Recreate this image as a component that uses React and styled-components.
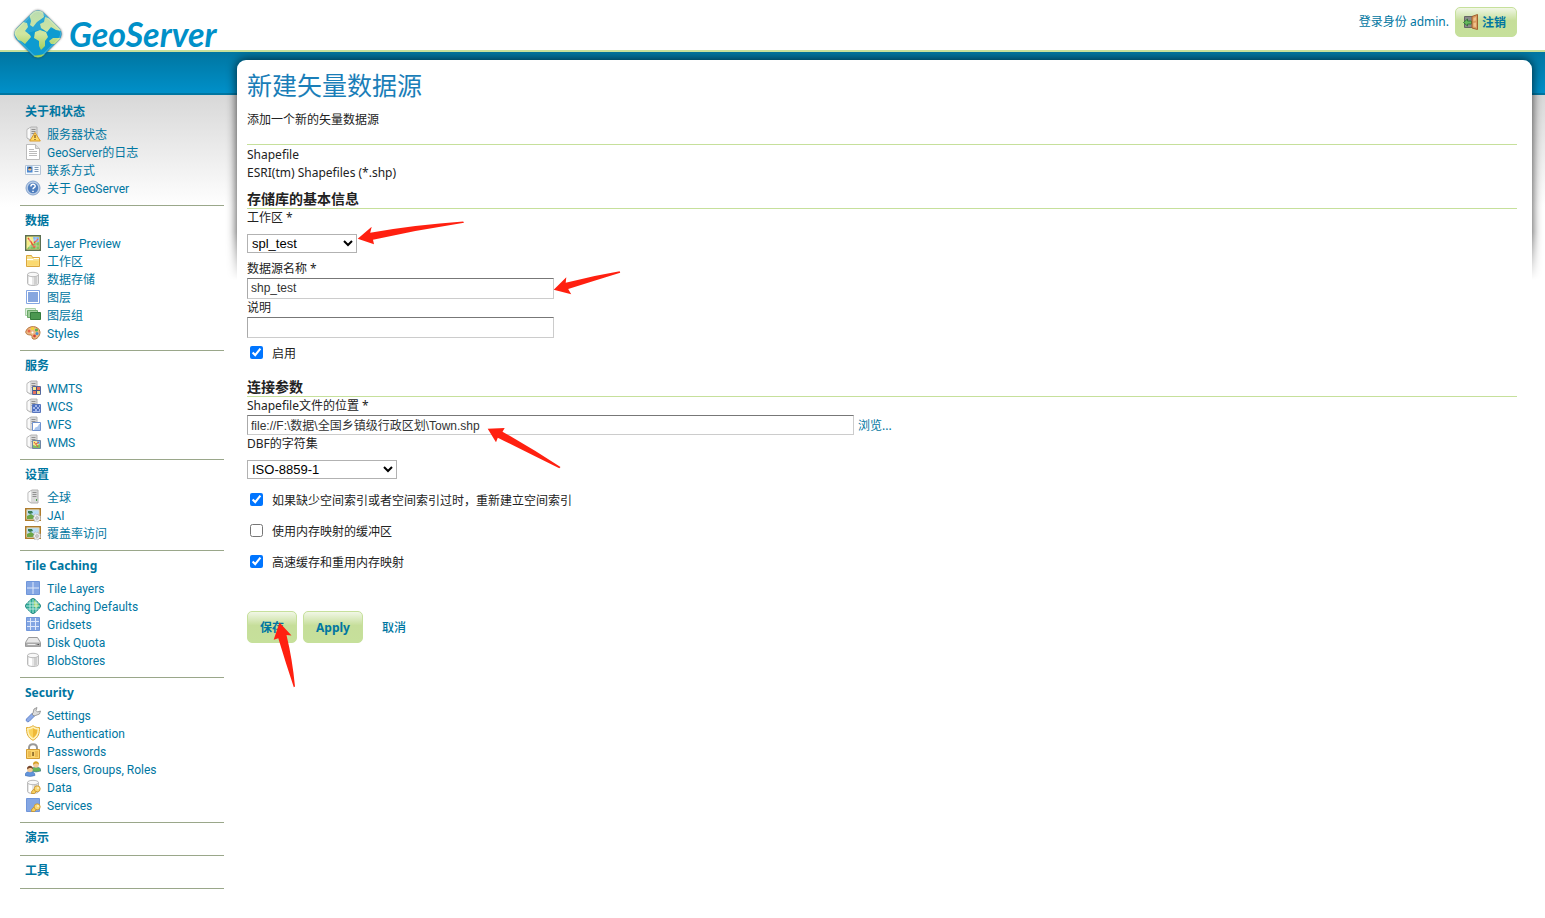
import React from 'react';
import styled, { createGlobalStyle } from 'styled-components';

const GlobalStyle = createGlobalStyle`
  * { box-sizing: border-box; }
  body {
    margin: 0;
    background: #fff;
    color: #222;
    font-family: "Noto Sans", "Noto Sans CJK SC", sans-serif;
    font-size: 12px;
    line-height: 18px;
  }
  h1, h2, h3, p, ul { margin: 0; padding: 0; }
  a { color: #0076a1; text-decoration: none; }
`;

const Header = styled.header`
  display: flex;
  justify-content: space-between;
  align-items: flex-start;
  height: 52px;
  padding: 7px 28px 0 10px;
  border-bottom: 2px solid #c6e09b;
`;

const Logo = styled.a`
  display: flex;
  align-items: flex-start;
  position: relative;
  z-index: 2;
`;

const LogoText = styled.span`
  margin: 7px 0 0 3px;
  color: #0090c8;
  font: italic 700 34px/40px Lato, sans-serif;
`;

const Login = styled.div`
  display: flex;
  align-items: center;
  gap: 6px;
  color: #0076a1;
`;

const Button = styled.button`
  display: flex;
  align-items: center;
  gap: 3px;
  height: ${props => (props.$small ? '30px' : '32px')};
  padding: 2px ${props => (props.$small ? '10px 0 7px' : '12px 0')};
  border: 1px solid #c6e09b;
  border-radius: 5px;
  background: linear-gradient(#f1f7e6, #c6de9a 45%, #c6e09b);
  color: #0076a1;
  font: inherit;
  font-weight: 700;
  cursor: pointer;
`;

const Body = styled.div`
  display: flex;
  align-items: flex-start;
  position: relative;
  background:
    linear-gradient(#0076a1, #0090c9 41px, #0076a1 41px, #0076a1 43px, transparent 43px) no-repeat,
    linear-gradient(#d8d8d8 43px, #fff 155px);
`;

// side shadow of the panel, faded out towards the bottom
const Shade = styled.div`
  position: absolute;
  top: 0;
  left: 217px;
  right: 0;
  height: 228px;
  padding: 8px 13px 0 20px;
  overflow: hidden;
  mask-image: linear-gradient(#000 180px, transparent);

  &::before {
    content: '';
    display: block;
    height: 260px;
    border-radius: 9px;
    box-shadow: 0 0 10px 1px rgba(0, 0, 0, 0.65);
  }
`;

const Sidebar = styled.nav`
  flex: none;
  width: 237px;
  padding: 45px 13px 29px 20px;
  position: relative;
`;

const Section = styled.section`
  padding: 6px 5px 8px;
  border-bottom: 1px solid #9aa78a;
`;

const SectionTitle = styled.h3`
  color: #0076a1;
  font-size: 12px;
  line-height: 18px;
`;

const Menu = styled.ul`
  margin: 5px 0 -1px;
  list-style: none;
`;

const MenuLink = styled.a`
  display: flex;
  align-items: center;
  gap: 6px;
  height: 18px;
  font-family: Roboto, "Noto Sans CJK SC", sans-serif;
`;

const IconBox = styled.svg`
  flex: none;
  width: 16px;
  height: 16px;
  margin-bottom: 2px;
`;

const Panel = styled.main`
  flex: 1;
  position: relative;
  margin: 8px 13px 0 0;
  padding: 9px 15px 40px 10px;
  border-radius: 9px;
  background: #fff;
`;

const PageHead = styled.div`
  margin-bottom: 1px;
  padding-bottom: 15px;
  border-bottom: 1px solid #c6e09b;
`;

const Title = styled.h1`
  margin-bottom: 10px;
  color: #1a7eb8;
  font-size: 25px;
  font-weight: 400;
  line-height: 32px;
`;

const GroupTitle = styled.h2`
  margin-top: ${props => (props.$spaced ? '15px' : '8px')};
  border-bottom: 1px solid #c6e09b;
  font-size: 14px;
  line-height: 18px;
`;

const Label = styled.label`
  display: block;
`;

const Select = styled.select`
  display: block;
  width: ${props => props.$width};
  height: 19px;
  margin: 7px 0;
  padding: 0;
  border: 1px solid #b2b2b2;
  background: #fff;
  color: #000;
  font: 13px "Liberation Sans", sans-serif;
`;

const TextInput = styled.input`
  display: block;
  width: ${props => (props.$wide ? '607px' : '307px')};
  max-width: 100%;
  height: ${props => (props.$wide ? '20px' : '21px')};
  padding: 0 3px 1px;
  border: 1px solid #ccc;
  border-top-color: #777;
  border-left-color: #aaa;
  color: #333;
  font: 12px "Liberation Sans", "Noto Sans CJK SC", sans-serif;
`;

const Row = styled.div`
  display: flex;
  align-items: flex-end;
  gap: 4px;
`;

const CheckRow = styled.label`
  display: flex;
  align-items: center;
  gap: 9px;
  margin-top: ${props => (props.$near ? '7px' : '13px')};

  input { margin: 0 0 3px 3px; }
`;

const Actions = styled.div`
  display: flex;
  align-items: center;
  gap: 6px;
  margin-top: 39px;
`;

const Cancel = styled.a`
  margin-left: 13px;
  padding-top: 2px;
  font-weight: 500;
`;

const Arrows = styled.svg`
  position: absolute;
  top: 0;
  left: 0;
  width: 400px;
  height: 640px;
  pointer-events: none;
`;

const Server = ({ x = 0 }) => (
  <g transform={`translate(${x} 0)`}>
    <path d="M2 3.500 6 1h6v13H5L2 12z" fill="#dadada" stroke="#b2b2b2" />
    <path d="M2.500 3.800 5 2v11l-2.500-1.500z" fill="#fafafa" />
    <path d="M6.500 3.500h4M6.500 5.500h4M6.500 7.500h4" stroke="#909090" />
  </g>
);

const Cylinder = () => (
  <>
    <path d="M2.500 3.500v9c0 1 2 2 5.500 2s5.500-1 5.500-2v-9z" fill="#e6e6e6" stroke="#bbb" />
    <path d="M4 5v8l3 .8V6z" fill="#fff" />
    <path d="M9 6v8l3-1V5z" fill="#cfcfcf" />
    <ellipse cx="8" cy="3.500" rx="5.500" ry="2.200" fill="#f8f8f8" stroke="#bbb" />
  </>
);

const Key = () => (
  <>
    <path d="m6.500 14.500.3-2.500 4.200-3.500 2.500 2-4 4z" fill="#f4cf62" stroke="#c99025" strokeWidth=".8" />
    <circle cx="12.200" cy="9.800" r="3" fill="#f9d978" stroke="#c99025" strokeWidth=".8" />
    <circle cx="13" cy="9" r=".8" fill="#fff" />
  </>
);

const Picture = () => (
  <>
    <path d="M.8 1.800h14.400v11.400H.8z" fill="#b8dcf4" stroke="#b07c2c" strokeWidth="1.600" />
    <path d="M1.800 2.800h12.400v9.400H1.800z" fill="none" stroke="#f1d492" strokeWidth=".6" />
    <path d="m2 12 0-3 4-2 3 2 3 3z" fill="#6ca646" />
    <path d="M3 4h4l1 2-3 1-2-1z" fill="#397c55" />
    <g stroke="#aaa" strokeWidth=".6" fill="#eee">
      <path d="m10.500 7 1 .9L13 7l.8 1.700 1.800.3-.3 1.900.6 1.600-1.600.8L13 15l-1.700-.9-1.800.4-.3-1.900L8 11.200l1.100-1.400-.2-1.800z" />
      <circle cx="12" cy="11" r="1.500" fill="#ccc" />
    </g>
  </>
);

const Square = () => <path d="M1.500 1.500h13v13h-13z" fill="#84a6e3" stroke="#7096da" />;

const Person = ({ x, y, hair, shirt }) => (
  <g transform={`translate(${x} ${y})`}>
    <path d="M0 10c0-3 2-4 5-4s5 1 5 4q-5 2-10 0z" fill={shirt} stroke="#3c6aa8" strokeWidth=".5" />
    <circle cx="5" cy="4" r="2.800" fill="#f4c997" />
    <path d="M2 4c-.6-5 6.500-5 6 0-1-2-4-2-6 0z" fill={hair} />
  </g>
);

const drawings = {
  status: (
    <>
      <Server />
      <path d="m10 6.500 5.300 8.500H4.700z" fill="#ffd965" stroke="#d99a2b" strokeLinejoin="round" />
      <path d="M10 9v3M10 13v1" stroke="#795019" strokeWidth="1.200" />
    </>
  ),
  log: (
    <>
      <path d="M1.500.5h9l4 4v11h-13z" fill="#fff" stroke="#bbb" />
      <path d="M10.500.5v4h4" fill="#ddd" stroke="#bbb" />
      <path d="M4 5.500h5M4 7.500h8M4 9.500h8M4 11.500h8" stroke="#bbb" />
    </>
  ),
  contact: (
    <>
      <path d="M.5 3.500h15v9H.5z" fill="#f6fafd" stroke="#b6c5d6" />
      <path d="M2 4.500h5.500v6H2z" fill="#4a89d3" />
      <circle cx="4.800" cy="7.300" r="1.500" fill="#f5c08c" />
      <path d="M3.300 6.500c0-2 3-2 3 0z" fill="#333" />
      <path d="M9.500 5.500h4M9.500 7.500h4M9.500 9.500h4" stroke="#7e9ab7" />
    </>
  ),
  help: (
    <>
      <circle cx="8" cy="8" r="7" fill="#b9cce6" stroke="#86a5cf" />
      <circle cx="8" cy="8" r="5.200" fill="#507fbf" />
      <path d="M5.900 6.500c0-3 4.300-2.800 4.300-.3 0 1.500-2.200 1.500-2.200 3M8 10.700v1.300" fill="none" stroke="#fff" strokeWidth="1.500" />
    </>
  ),
  preview: (
    <>
      <path d="M.7.7h14.600v14.600H.7z" fill="#f5ec85" stroke="#5c6f52" strokeWidth="1.400" />
      <path d="M8 2h6v5L9 8z" fill="#88b9f2" />
      <path d="m2 14 3-4 5-2 4-1v7z" fill="#83c260" />
      <path d="m3 3 3 4 3 5 2-1M9 8l4-4" fill="none" stroke="#e65036" strokeWidth="1.400" />
      <path d="M5 2v12M11 2v12M2 5h12M2 11h12" stroke="#fff" strokeOpacity=".35" />
    </>
  ),
  folder: (
    <>
      <path d="M1.500 13.500v-11h5l1 2h7v9z" fill="#f8e18e" stroke="#dca73e" />
      <path d="M2 6.500h6l1-1h5" fill="none" stroke="#fff" />
      <path d="M2.500 8h11v4.500h-11z" fill="#fbd970" />
    </>
  ),
  store: <Cylinder />,
  layer: (
    <>
      <path d="M1.500 1.500h13v13h-13z" fill="#fff" stroke="#84a6e3" />
      <path d="M3 3h10v10H3z" fill="#86a6df" />
    </>
  ),
  group: (
    <>
      <path d="M.5 1.500h10v7H.5z" fill="#dcefdc" stroke="#a8cfa6" />
      <path d="M2.500 3.500h10v7h-10z" fill="#9dcc99" stroke="#6aa868" />
      <path d="M5.500 5.500h10v7h-10z" fill="#4b9850" stroke="#347b3c" />
    </>
  ),
  styles: (
    <>
      <path d="M1 6c2-6 13-6 14 1 0 4-3 8-7 7-2-1 0-4-2-4-3 0-6-1-5-4z" fill="#edb982" stroke="#b87842" />
      <circle cx="4" cy="6" r="1.500" fill="#e46448" />
      <circle cx="7.500" cy="3.500" r="1.600" fill="#f5d532" />
      <circle cx="11.500" cy="5" r="1.600" fill="#60b64a" />
      <circle cx="12" cy="8.500" r="1.500" fill="#488ed1" />
      <circle cx="9.500" cy="11" r="1.400" fill="#d34235" />
      <circle cx="7.500" cy="7.500" r="1" fill="#fff" />
    </>
  ),
  wmts: (
    <>
      <Server />
      <path d="M7.500 6.500h8v8h-8z" fill="#f5e68d" stroke="#56699e" />
      <path d="M12 7h3v3h-3zM8 11h3v3H8z" fill="#e7715e" />
      <path d="M11.500 7v7M8 10.500h7" stroke="#414f87" />
    </>
  ),
  wcs: (
    <>
      <Server />
      <path d="M7.500 6.500h8v8h-8z" fill="#a2b7ea" stroke="#5775bd" />
      <path d="M8 7h2v2H8zM12 7h2v2h-2zM10 9h2v2h-2zM8 11h2v2H8zM12 11h2v2h-2zM14 9h1v2h-1z" fill="#4d6ebf" />
    </>
  ),
  wfs: (
    <>
      <Server />
      <path d="M7.500 6.500h8v8h-8z" fill="#fff" stroke="#6e91ce" />
      <path d="M9 14c1-2 1-3 3-3 2-1 1-3 3-3v6z" fill="#a8c4ed" />
    </>
  ),
  wms: (
    <>
      <Server />
      <path d="M7.500 6.500h8v8h-8z" fill="#f5e68d" stroke="#6f86a5" />
      <path d="M12 7h3v3h-3z" fill="#82b8e8" />
      <path d="M8 14v-3l3 1 4-2v4z" fill="#83bd62" />
      <path d="m9 8 4 5M11 10l3-2" stroke="#df5938" />
    </>
  ),
  server: (
    <>
      <Server x={1} />
      <path d="M11 10h1v2h-1z" fill="#4aa34a" />
    </>
  ),
  picture: <Picture />,
  tiles: (
    <>
      <Square />
      <path d="M8 2v12M2 8h12" stroke="#dfe9fb" />
    </>
  ),
  globe: (
    <>
      <path d="m8 .5 2 .8 4.800 5 .7 1.700-.7 1.700-4.800 5-2 .8-2-.8-4.800-5L.5 8l.7-1.700 4.800-5z" fill="#29a994" stroke="#16807b" />
      <path d="M9 2l5 5-2 3-3-1z" fill="#a3d86f" />
      <path d="M5 2v12M8 1v14M11 2v12M2 5h12M1 8h14M2 11h12" stroke="#d7f4ec" strokeWidth=".8" />
    </>
  ),
  grid: (
    <>
      <Square />
      <path d="M5.500 2v12M10.500 2v12M2 5.500h12M2 10.500h12" stroke="#dfe9fb" />
    </>
  ),
  disk: (
    <>
      <path d="m3.500 3.500-3 5v4h15v-4l-3-5z" fill="#e8e8e8" stroke="#999" />
      <path d="M1 8.500h14v4H1z" fill="#aaa" />
      <path d="M2.500 10.500h8" stroke="#eee" />
      <path d="M12.500 10h1.500v1h-1.500z" fill="#555" />
    </>
  ),
  wrench: (
    <>
      <path d="m1.500 12 6-6 2.500 2.500-6 6c-2 1-3.500-1-2.500-2.500z" fill="#8eace8" stroke="#6486cc" />
      <path d="m8 6 1-4 3-1.500-1 3 1.500 1.500 3-1-1 3-4 1.500L9 9 7 7z" fill="#ddd" stroke="#888" strokeWidth=".8" />
    </>
  ),
  shield: (
    <>
      <path d="M1.500 2.500C4 3 6 2 8 .7 10 2 12 3 14.500 2.500c0 6-1 10-6.500 12.800C2.500 12.500 1.500 8.500 1.500 2.500z" fill="#fff3bd" stroke="#e2ad32" />
      <path d="M3.500 4.500Q6 4.500 8 3v10C4.500 11 3.500 8 3.500 4.500z" fill="#fad35b" />
      <path d="M8 3q2 1.500 4.500 1.500C12.500 8 11.500 11 8 13z" fill="#efb938" />
    </>
  ),
  lock: (
    <>
      <path d="M4 7V5c0-5 8-5 8 0v2" fill="none" stroke="#999" strokeWidth="2" />
      <path d="M1.500 6.500h13v9h-13z" fill="#fbd56d" stroke="#d49d34" />
      <path d="M3 9h3M3 11h3M3 13h3M10 9h3M10 11h3M10 13h3" stroke="#dfa33a" />
      <path d="M7.300 9h1.500v4H7.300z" fill="#7d5a20" />
    </>
  ),
  users: (
    <>
      <Person x={6} y={0} hair="#d4a126" shirt="#68b357" />
      <Person x={0} y={4.5} hair="#75462b" shirt="#6294dc" />
    </>
  ),
  dataKey: (
    <>
      <Cylinder />
      <Key />
    </>
  ),
  serviceKey: (
    <>
      <Square />
      <Key />
    </>
  ),
  door: (
    <>
      <path d="M1.500 2.500h8v11h-8z" fill="#8a8a8a" stroke="#666" />
      <path d="m.5 8.500 4-3.500v2h4v3h-4v2z" fill="#67b75e" stroke="#27702c" strokeWidth=".8" />
      <path d="m9 2.500 5.500-2v15L9 14z" fill="#d99d60" stroke="#a2602e" />
      <path d="M10.500 4 13 3v3.500l-2.500.5zM10.500 9l2.500-.5V13l-2.500-.5z" fill="#efc18a" />
    </>
  ),
};

const Icon = ({ name }) => (
  <IconBox viewBox="0 0 16 16" aria-hidden="true">{drawings[name]}</IconBox>
);

const sections = [
  { title: '关于和状态', items: [['status', '服务器状态'], ['log', 'GeoServer的日志'], ['contact', '联系方式'], ['help', '关于 GeoServer']] },
  { title: '数据', items: [['preview', 'Layer Preview'], ['folder', '工作区'], ['store', '数据存储'], ['layer', '图层'], ['group', '图层组'], ['styles', 'Styles']] },
  { title: '服务', items: [['wmts', 'WMTS'], ['wcs', 'WCS'], ['wfs', 'WFS'], ['wms', 'WMS']] },
  { title: '设置', items: [['server', '全球'], ['picture', 'JAI'], ['picture', '覆盖率访问']] },
  { title: 'Tile Caching', items: [['tiles', 'Tile Layers'], ['globe', 'Caching Defaults'], ['grid', 'Gridsets'], ['disk', 'Disk Quota'], ['store', 'BlobStores']] },
  { title: 'Security', items: [['wrench', 'Settings'], ['shield', 'Authentication'], ['lock', 'Passwords'], ['users', 'Users, Groups, Roles'], ['dataKey', 'Data'], ['serviceKey', 'Services']] },
  { title: '演示', items: [] },
  { title: '工具', items: [] },
];

const LogoMark = () => (
  <svg width="56" height="56" viewBox="0 0 56 56" aria-hidden="true">
    <defs>
      <linearGradient id="land" gradientUnits="userSpaceOnUse" x1="0" y1="4" x2="0" y2="50">
        <stop offset="0" stopColor="#b9dcb0" />
        <stop offset=".5" stopColor="#d0e69f" />
        <stop offset="1" stopColor="#8cc540" />
      </linearGradient>
      <clipPath id="gem">
        <rect x="9" y="8" width="38" height="38" rx="8" transform="rotate(45 28 27)" />
      </clipPath>
      <filter id="soft" x="-20%" y="-20%" width="140%" height="140%">
        <feGaussianBlur stdDeviation="1.300" />
      </filter>
    </defs>
    <rect x="9" y="8" width="38" height="38" rx="8" transform="rotate(45 28 27)" fill="#333" opacity=".8" filter="url(#soft)" />
    <g clipPath="url(#gem)">
      <path d="M0 0h56v56H0z" fill="#0e9bd0" />
      <path d="M0 0h56v22Q28 18 0 34z" fill="#52b8dd" opacity=".35" />
      <g fill="url(#land)">
        <path d="M3 25 13 15l4 1 1 4-3 4 5 4 1 2-6 7-4-3-3-1z" />
        <path d="m19 7 6-4 8 1 1 6-7 5-4 5-3-2 1-4z" />
        <path d="m30 17 4-2 1-5 6 2 11 12-6-1-5-3-4 5-6-4z" />
        <path d="m25 25 5-2 6 2 2 5-3 4v5l-4 4-2-4v-5l-5-3z" />
        <path d="m39 34 4-3h8l-1 4-5 2h-4zM22 49l14-2-5 6z" />
      </g>
    </g>
    <rect x="10" y="9" width="36" height="36" rx="7" transform="rotate(45 28 27)" fill="none" stroke="#fff" strokeOpacity=".2" />
  </svg>
);

const Check = ({ children, checked, near }) => (
  <CheckRow $near={near}>
    <input type="checkbox" defaultChecked={checked} />
    {children}
  </CheckRow>
);

const App = () => {
  return (
    <>
      <GlobalStyle />
      <Header>
        <Logo href="#home">
          <LogoMark />
          <LogoText>GeoServer</LogoText>
        </Logo>
        <Login>
          <span>登录身份 admin.</span>
          <Button type="button" $small><Icon name="door" />注销</Button>
        </Login>
      </Header>
      <Body>
        <Shade />
        <Sidebar>
          {sections.map(section => (
            <Section key={section.title}>
              <SectionTitle>{section.title}</SectionTitle>
              {section.items.length > 0 && (
                <Menu>
                  {section.items.map(([icon, text]) => (
                    <li key={text}>
                      <MenuLink href="#page"><Icon name={icon} />{text}</MenuLink>
                    </li>
                  ))}
                </Menu>
              )}
            </Section>
          ))}
        </Sidebar>
        <Panel>
          <PageHead>
            <Title>新建矢量数据源</Title>
            <p>添加一个新的矢量数据源</p>
          </PageHead>
          <p>Shapefile</p>
          <p>ESRI(tm) Shapefiles (*.shp)</p>

          <GroupTitle>存储库的基本信息</GroupTitle>
          <Label htmlFor="workspace">工作区 *</Label>
          <Select id="workspace" $width="110px"><option>spl_test</option></Select>
          <Label htmlFor="name">数据源名称 *</Label>
          <TextInput id="name" type="text" defaultValue="shp_test" />
          <Label htmlFor="description">说明</Label>
          <TextInput id="description" type="text" />
          <Check checked near>启用</Check>

          <GroupTitle $spaced>连接参数</GroupTitle>
          <Label htmlFor="location">Shapefile文件的位置 *</Label>
          <Row>
            <TextInput id="location" type="text" $wide defaultValue="file://F:\数据\全国乡镇级行政区划\Town.shp" />
            <a href="#browse">浏览...</a>
          </Row>
          <Label htmlFor="charset">DBF的字符集</Label>
          <Select id="charset" $width="150px"><option>ISO-8859-1</option></Select>
          <Check checked>如果缺少空间索引或者空间索引过时，重新建立空间索引</Check>
          <Check>使用内存映射的缓冲区</Check>
          <Check checked>高速缓存和重用内存映射</Check>

          <Actions>
            <Button type="submit">保存</Button>
            <Button type="button">Apply</Button>
            <Cancel href="#cancel">取消</Cancel>
          </Actions>

          <Arrows viewBox="237 60 400 640" fill="#ff2010" aria-hidden="true">
            <path d="m357.700 238.700 14-12-1.500 6q46-8 93-11.200l.8 1.200q-46 7-91 17l1 4.500z" />
            <path d="m553.700 289.700 12.600-12.400-.6 5.500q27-7 54-11.500l.5 1.500q-26 8-52 16.300l3 5.200z" />
            <path d="m487.700 428.700 17-.8-2.200 3.800q30 17 58 35.300l-1.200 1.200q-31-15-61.500-30.500l-1.800 4.600z" />
            <path d="m279.500 622.500 12 13-5-.4q6 25 8.500 51.500l-1.200.6q-8-24-15.500-49l-4.600 1.500z" />
          </Arrows>
        </Panel>
      </Body>
    </>
  );
};

export default App;
